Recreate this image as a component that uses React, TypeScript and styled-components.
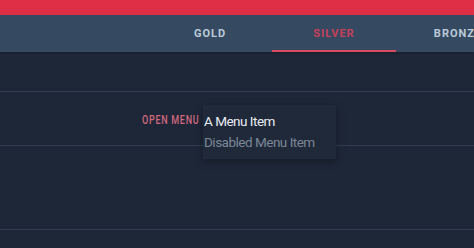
import * as React from "react";
import styled, { createGlobalStyle } from "styled-components";

const GlobalStyle = createGlobalStyle`
  html, body {
    margin: 0;
    padding: 0;
    background: #1e2738;
    overflow: hidden;
  }
  * { box-sizing: border-box; }
`;

const Page = styled.div`
  width: 474px;
  height: 248px;
  background: #1e2738;
  overflow: hidden;
  font-family: Roboto, "Liberation Sans", sans-serif;
`;

const TopBar = styled.div`
  height: 15px;
  background: #df2f47;
`;

const TabBar = styled.div`
  height: 37px;
  background: #354a61;
  display: flex;
  padding-left: 148px;
  overflow: hidden;
  box-shadow: 0 1px 2px rgba(0, 0, 0, 0.25);
`;

const Tab = styled.div<{ $active?: boolean }>`
  flex: 0 0 124px;
  display: flex;
  align-items: center;
  justify-content: center;
  position: relative;
  font-size: 11px;
  font-weight: 700;
  letter-spacing: 1px;
  color: ${(p) => (p.$active ? "#c63f5a" : "#bccadb")};
  &::after {
    content: "";
    display: ${(p) => (p.$active ? "block" : "none")};
    position: absolute;
    left: 0;
    right: 0;
    bottom: 0;
    height: 2px;
    background: #d94a60;
  }
`;

const Section = styled.div<{ $h: number }>`
  height: ${(p) => p.$h}px;
  border-bottom: 1px solid #2f3d51;
  display: flex;
  align-items: center;
  padding-left: 142px;
  padding-top: 3px;
`;

const Anchor = styled.div`
  position: relative;
  display: flex;
  align-items: center;
`;

const Trigger = styled.span`
  display: flex;
  align-items: center;
  width: 55px;
  height: 14px;
  white-space: nowrap;
`;

const TriggerText = styled.span`
  display: block;
  font-size: 12.5px;
  font-weight: 500;
  letter-spacing: 1px;
  line-height: 14px;
  color: #d0677d;
  transform: scaleX(0.72);
  transform-origin: left center;
`;

const Menu = styled.div`
  position: absolute;
  left: calc(100% + 6px);
  top: -8px;
  width: 133px;
  padding: 6px 0 6px 1px;
  background: #1f293a;
  box-shadow: 0 2px 8px rgba(0, 0, 0, 0.35);
  z-index: 2;
`;

const Item = styled.div<{ $disabled?: boolean }>`
  height: 21px;
  line-height: 21px;
  font-size: 13.5px;
  letter-spacing: -0.5px;
  white-space: nowrap;
  color: ${(p) => (p.$disabled ? "#7b8696" : "#e9edf3")};
`;

export default function App() {
  return (
    <Page>
      <GlobalStyle />
      <TopBar />
      <TabBar>
        <Tab>GOLD</Tab>
        <Tab $active>SILVER</Tab>
        <Tab>BRONZE</Tab>
      </TabBar>
      <Section $h={40} />
      <Section $h={54}>
        <Anchor>
          <Trigger>
            <TriggerText>OPEN MENU</TriggerText>
          </Trigger>
          <Menu>
            <Item>A Menu Item</Item>
            <Item $disabled>Disabled Menu Item</Item>
          </Menu>
        </Anchor>
      </Section>
      <Section $h={84} />
    </Page>
  );
}
